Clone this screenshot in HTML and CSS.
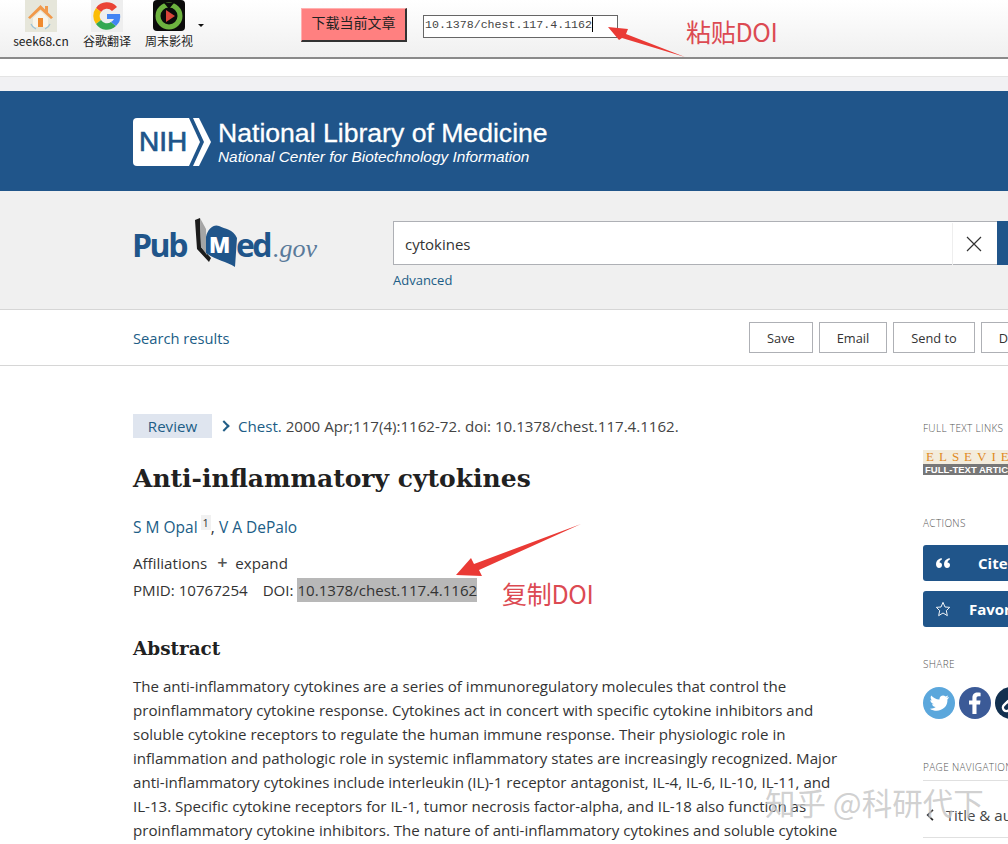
FILE: index.html
```html
<!DOCTYPE html>
<html lang="en">
<head>
    <meta charset="UTF-8">
    <title>Anti-inflammatory cytokines - PubMed</title>
    <link rel="stylesheet" href="styles.css">
</head>
<body>
<div class="page">
    <div class="browser-bar">
        <div class="fav">
            <svg class="fav-icon" viewBox="0 0 32 32">
                <rect width="32" height="32" fill="#e6e6da"/>
                <path d="M8 18 L15.500 11 L23 18 V27 H8 Z" fill="#f8f4ea"/>
                <path d="M15.500 5 L20 9.500 V6 H23 V12.500 L28 17.500 L26 19 L15.500 9.500 L5 19 L3 17.500 Z" fill="#f1994a"/>
                <rect x="13" y="18" width="5" height="9" fill="#ef8a2e"/>
                <path d="M6 24 C7 27 9 28 11 29 M25 24 C24 27 22 28 20 29" fill="none" stroke="#9cc3d8" stroke-width="1.200"/>
            </svg>
            <span>seek68.cn</span>
        </div>
        <div class="fav fav-wide">
            <svg class="fav-icon" viewBox="0 0 32 32">
                <rect width="32" height="32" fill="#eeeeee"/>
                <path d="M26 7 A13 13 0 0 0 5 8 L10 12 A7 7 0 0 1 21 11 Z" fill="#ea4335"/>
                <path d="M5 8 A13 13 0 0 0 5 24 L10 20 A7 7 0 0 1 10 12 Z" fill="#fbbc05"/>
                <path d="M5 24 A13 13 0 0 0 25 26 L20 22 A7 7 0 0 1 10 20 Z" fill="#34a853"/>
                <path d="M25 26 A13 13 0 0 0 29 14 H16 V19 H23 A7 7 0 0 1 20 22 Z" fill="#4285f4"/>
            </svg>
            <span>谷歌翻译</span>
        </div>
        <div class="fav fav-last">
            <svg class="fav-icon" viewBox="0 0 32 32">
                <rect width="32" height="31" rx="4" fill="#0b0b0b"/>
                <circle cx="16" cy="16" r="11" fill="none" stroke="#6db33f" stroke-width="5"/>
                <path d="M11 3 L21 3 L16 9 Z" fill="#0b0b0b"/>
                <path d="M13 10 L22 16 L13 22 Z" fill="#d9453a"/>
            </svg>
            <span>周末影视</span>
        </div>
        <span class="fav-more"></span>
        <button class="download-btn">下载当前文章</button>
        <div class="doi-input">10.1378/chest.117.4.1162<i class="caret"></i></div>
    </div>
    <div class="tab-gap"></div>

    <div class="nih-banner">
        <svg class="nih-logo" viewBox="0 0 78 48">
            <path d="M4 0 H56 L67 24 L56 48 H4 A4 4 0 0 1 0 44 V4 A4 4 0 0 1 4 0 Z" fill="#fff"/>
            <path d="M60 0 H66 L78 24 L66 48 H60 L71 24 Z" fill="#fff"/>
            <text x="6" y="33" class="nih-mark">NIH</text>
        </svg>
        <div class="nih-text">
            <div class="nih-title">National Library of Medicine</div>
            <div class="nih-sub">National Center for Biotechnology Information</div>
        </div>
    </div>

    <div class="search-band">
        <div class="pubmed-logo">
            <span class="pm-word">Pub</span>
            <svg class="pm-book" viewBox="0 0 54 54">
                <path d="M9 5 L14 3 L15 32 L25 43 L23 47 L11 34 Z" fill="#1c1c1c"/>
                <path d="M14 3 L20 14 L21 40 L15 32 Z" fill="#a5a5a5"/>
                <path d="M20 22 C22 13 28 9 33 11 C39 14 47 14 51 23 L49 52 C40 46 29 45 20 38 Z" fill="#20558a"/>
                <text x="23" y="38" class="pm-m">M</text>
            </svg>
            <span class="pm-word">ed</span>
            <span class="pm-gov">.gov</span>
        </div>
        <div class="search-col">
            <div class="search-row">
                <div class="search-box">
                    <span>cytokines</span>
                    <div class="search-clear">
                        <svg width="16" height="16" viewBox="0 0 16 16"><path d="M1 1 L15 15 M15 1 L1 15" stroke="#333" stroke-width="1.200"/></svg>
                    </div>
                </div>
                <div class="search-go"></div>
            </div>
            <a class="advanced">Advanced</a>
        </div>
    </div>

    <div class="results-bar">
        <a class="results-link">Search results</a>
        <div class="results-actions">
            <span class="action-btn">Save</span>
            <span class="action-btn">Email</span>
            <span class="action-btn">Send to</span>
            <span class="action-btn">Display options</span>
        </div>
    </div>

    <div class="content">
        <div class="article">
            <div class="cit-row">
                <span class="chip">Review</span>
                <span class="cit-chevron"></span>
                <span class="cit"><a>Chest.</a> 2000 Apr;117(4):1162-72. doi: 10.1378/chest.117.4.1162.</span>
            </div>
            <h1>Anti-inflammatory cytokines</h1>
            <div class="authors"><a>S M Opal</a><sup class="aff-num">1</sup>, <a>V A DePalo</a></div>
            <div class="affil">Affiliations <span class="plus">+</span> expand</div>
            <div class="ids">PMID: 10767254 <span class="doi-label">DOI:</span> <span class="selected">10.1378/chest.117.4.1162</span></div>
            <h2>Abstract</h2>
            <p class="abstract">The anti-inflammatory cytokines are a series of immunoregulatory molecules that control the proinflammatory cytokine response. Cytokines act in concert with specific cytokine inhibitors and soluble cytokine receptors to regulate the human immune response. Their physiologic role in inflammation and pathologic role in systemic inflammatory states are increasingly recognized. Major anti-inflammatory cytokines include interleukin (IL)-1 receptor antagonist, IL-4, IL-6, IL-10, IL-11, and IL-13. Specific cytokine receptors for IL-1, tumor necrosis factor-alpha, and IL-18 also function as proinflammatory cytokine inhibitors. The nature of anti-inflammatory cytokines and soluble cytokine</p>
        </div>
        <div class="sidebar">
            <div class="side-label">Full text links</div>
            <div class="elsevier">
                <div class="els-top">ELSEVIER</div>
                <div class="els-bottom">FULL-TEXT ARTICLE</div>
            </div>
            <div class="side-label side-actions">Actions</div>
            <div class="side-btn">
                <svg class="side-ico" width="16" height="12" viewBox="0 0 16 12">
                    <path id="qt" d="M6.500 1 C3 2 1 4 1 7 C1 9.500 2.500 11 4 11 C5.700 11 7 9.800 7 8 C7 6.500 6 5.500 4.500 5.500 C4.700 4 5.500 3 7 2.500 Z" fill="#fff"/>
                    <use href="#qt" x="8"/>
                </svg>
                <span class="side-btn-text cite-text">Cite</span>
            </div>
            <div class="side-btn">
                <svg class="side-ico" width="16" height="16" viewBox="0 0 24 24"><path d="M12 2 L15 9 L22 9.500 L17 14.500 L18.500 22 L12 18 L5.500 22 L7 14.500 L2 9.500 L9 9 Z" fill="none" stroke="#fff" stroke-width="1.400"/></svg>
                <span class="side-btn-text">Favorites</span>
            </div>
            <div class="side-label side-share">Share</div>
            <div class="share-row">
                <svg class="share" viewBox="0 0 32 32"><circle cx="16" cy="16" r="16" fill="#5ba7dc"/><path d="M26 10 C25 10.500 24.200 10.700 23.400 10.800 C24.300 10.300 24.900 9.500 25.200 8.600 C24.400 9.100 23.500 9.400 22.500 9.600 C20.500 7.500 16.400 8.700 16.400 12.500 C13 12.300 10.200 10.800 8.200 8.400 C7.100 10.200 7.700 12.500 9.300 13.600 C8.600 13.600 8 13.400 7.400 13.100 C7.400 15.100 8.800 16.700 10.700 17.100 C10.100 17.300 9.500 17.300 8.900 17.200 C9.400 18.800 11 20 12.700 20 C11 21.300 9 21.900 6.800 21.700 C15 27 25.200 21.500 24.400 12.600 C25 12.100 25.600 11.100 26 10 Z" fill="#fff"/></svg>
                <svg class="share" viewBox="0 0 32 32"><circle cx="16" cy="16" r="16" fill="#3b5a97"/><path d="M17.500 27 V17.500 H21 L21.500 13.500 H17.500 V11.200 C17.500 10 18 9.200 19.500 9.200 H21.600 V5.700 C21 5.600 19.800 5.500 18.600 5.500 C15.500 5.500 13.400 7.300 13.400 10.800 V13.500 H10 V17.500 H13.400 V27 Z" fill="#fff"/></svg>
                <svg class="share" viewBox="0 0 32 32"><circle cx="16" cy="16" r="16" fill="#12304f"/><g fill="none" stroke="#fff" stroke-width="2.400" transform="rotate(-45 16 16)"><rect x="6" y="12.500" width="12" height="7" rx="3.500"/><rect x="14" y="12.500" width="12" height="7" rx="3.500"/></g></svg>
            </div>
            <div class="side-label side-nav">Page navigation</div>
            <div class="page-nav">
                <svg width="10" height="14" viewBox="0 0 10 14"><path d="M8 1 L2 7 L8 13" fill="none" stroke="#222" stroke-width="2"/></svg>
                <span>Title &amp; authors</span>
            </div>
        </div>
    </div>

    <!-- screenshot annotations on top of the page -->
    <svg class="marks" width="1008" height="844" viewBox="0 0 1008 844">
        <polygon points="608,27 628,29 626,34 685,57 622,38 619,40" fill="#ea3a35"/>
        <polygon points="456,575 471,558 474,564 581,524 479,570 482,576" fill="#ea3a35"/>
    </svg>
    <div class="note note-paste">粘贴DOI</div>
    <div class="note note-copy">复制DOI</div>
    <div class="watermark">知乎 @科研代下</div>
</div>
</body>
</html>
```

FILE: styles.css
```css
* {
    box-sizing: border-box;
}

body {
    margin: 0;
    font-family: "Open Sans", "Noto Sans CJK SC", sans-serif;
    color: #333;
    background: #fff;
}

a {
    color: #205d86;
}

.page {
    position: relative;
    width: 1008px;
    height: 844px;
    overflow: hidden;
}

/* browser favourites bar */
.browser-bar {
    display: flex;
    align-items: flex-start;
    height: 59px;
    padding-left: 10px;
    background: linear-gradient(#ffffff, #f0f0f0);
    border-bottom: 2px solid #8a8a8a;
}

.fav {
    display: flex;
    flex-direction: column;
    align-items: center;
    width: 62px;
    font-family: "Noto Sans CJK SC", sans-serif;
    font-size: 12px;
    line-height: 17px;
    color: #222;
}

.fav-wide {
    margin-left: 4px;
}

.fav-last {
    margin-left: 0;
}

.fav-icon {
    display: block;
    width: 32px;
    height: 32px;
}

.fav-more {
    width: 0;
    height: 0;
    margin: 24px 0 0 -2px;
    border: 3px solid transparent;
    border-top: 3px solid #111;
}

.download-btn {
    width: 106px;
    height: 34px;
    margin: 8px 0 0 97px;
    padding: 0 0 6px;
    font-family: "Noto Sans CJK SC", sans-serif;
    font-size: 14px;
    color: #222;
    background: #ff8080;
    border: 1px solid #ffb0b0;
    border-right: 2px solid #333;
    border-bottom: 2px solid #333;
}

.doi-input {
    display: flex;
    align-items: center;
    width: 195px;
    height: 23px;
    margin: 15px 0 0 16px;
    padding: 0 0 4px 1px;
    font-family: "Liberation Mono", monospace;
    font-size: 11.600px;
    color: #444;
    background: #fff;
    border: 1px solid #666;
}

.caret {
    width: 1px;
    height: 15px;
    background: #000;
}

.tab-gap {
    height: 32px;
    background: linear-gradient(#fff 0, #fff 17px, #e4e4e4 17px, #e4e4e4 18px, #f1f1f3 18px);
}

/* NIH banner */
.nih-banner {
    display: flex;
    align-items: flex-start;
    height: 100px;
    padding: 27px 0 0 133px;
    background: #20558a;
    color: #fff;
}

.nih-logo {
    width: 78px;
    height: 48px;
    margin-right: 7px;
}

.nih-mark {
    font-family: "Liberation Sans", sans-serif;
    font-size: 28px;
    stroke: #20558a;
    stroke-width: 0.700px;
    fill: #20558a;
}

.nih-text {
    font-family: "Liberation Sans", sans-serif;
}

.nih-title {
    font-size: 26.600px;
    line-height: 30px;
    -webkit-text-stroke: 0.300px #fff;
}

.nih-sub {
    font-size: 15.400px;
    font-style: italic;
    line-height: 18px;
}

/* search */
.search-band {
    display: flex;
    height: 119px;
    padding: 30px 0 0 133px;
    background: #f0f0f0;
    border-bottom: 1px solid #d6d6d6;
}

.pubmed-logo {
    display: flex;
    flex: none;
    align-items: flex-start;
    width: 260px;
}

.pm-word {
    margin: 2px 0 0 -1px;
    font-size: 32px;
    font-weight: 700;
    line-height: 44px;
    letter-spacing: -2.500px;
    color: #20558a;
}

.pm-book {
    flex: none;
    width: 54px;
    height: 54px;
    margin: -6px -3px 0 0;
}

.pm-m {
    font-size: 22px;
    font-weight: 800;
    fill: #fff;
}

.pm-gov {
    margin: 10px 0 0 3px;
    font-family: "Liberation Serif", serif;
    font-size: 26px;
    font-style: italic;
    line-height: 36px;
    color: #5a7a9a;
}

.search-col {
    flex: none;
}

.search-row {
    display: flex;
}

.search-box {
    display: flex;
    align-items: center;
    justify-content: space-between;
    width: 604px;
    height: 44px;
    padding: 1px 0 0 11px;
    font-size: 15px;
    background: #fff;
    border: 1px solid #aeb0b5;
    border-right: none;
}

.search-clear {
    display: flex;
    align-items: center;
    justify-content: center;
    width: 45px;
    height: 42px;
    padding-right: 2px;
    border-left: 1px solid #eee;
}

.search-go {
    width: 60px;
    height: 44px;
    background: #20558a;
}

.advanced {
    display: block;
    margin-top: 6px;
    font-size: 13px;
    line-height: 18px;
}

/* results bar */
.results-bar {
    display: flex;
    align-items: center;
    justify-content: space-between;
    width: 1200px;
    height: 56px;
    padding: 0 0 0 133px;
    border-bottom: 1px solid #d6d6d6;
}

.results-link {
    font-size: 14.700px;
}

.results-actions {
    display: flex;
    gap: 6px;
    width: 451px;
}

.action-btn {
    padding: 0 17px;
    height: 31px;
    font-size: 12.800px;
    line-height: 30px;
    white-space: nowrap;
    color: #333;
    border: 1px solid #aeb0b5;
}

/* article and sidebar */
.content {
    display: flex;
    padding: 48px 0 0 133px;
}

.article {
    flex: none;
    width: 708px;
    margin-right: 82px;
}

.cit-row {
    display: flex;
    align-items: center;
    height: 24px;
    font-size: 15.100px;
}

.chip {
    width: 79px;
    height: 24px;
    line-height: 24px;
    text-align: center;
    color: #205d86;
    background: #dfe5ef;
}

.cit-chevron {
    width: 8px;
    height: 8px;
    margin: 0 10px 0 8px;
    border-top: 2px solid #205d86;
    border-right: 2px solid #205d86;
    transform: rotate(45deg);
}

.cit {
    color: #444;
}

h1 {
    margin: 23px 0 0;
    font-family: "DejaVu Serif", serif;
    font-size: 25px;
    font-weight: 700;
    line-height: 36px;
    color: #212121;
}

.authors {
    margin-top: 18px;
    height: 24px;
    font-size: 15.500px;
    line-height: 24px;
}

.aff-num {
    margin-left: 3px;
    padding: 0 2px;
    font-size: 11px;
    line-height: 0;
    background: #f1f1f1;
}

.affil {
    margin-top: 12px;
    font-size: 15.100px;
    line-height: 24px;
}

.plus {
    margin: 0 4px 0 6px;
    font-weight: 600;
    font-size: 18px;
    line-height: 1;
    color: #555;
}

.ids {
    margin-top: 3px;
    font-size: 15.100px;
    line-height: 24px;
}

.doi-label {
    margin-left: 11px;
}

.selected {
    display: inline-block;
    background: #b8b8b8;
}

h2 {
    margin: 31px 0 0;
    font-family: "DejaVu Serif", serif;
    font-size: 18.400px;
    font-weight: 700;
    line-height: 32px;
    color: #212121;
}

.abstract {
    margin: 9px 0 0;
    font-size: 15.100px;
    line-height: 24px;
}

.sidebar {
    flex: none;
    width: 126px;
}

.side-label {
    padding-top: 7px;
    font-size: 10px;
    font-weight: 300;
    line-height: 14px;
    letter-spacing: 0.350px;
    white-space: nowrap;
    text-transform: uppercase;
    color: #555;
}

.elsevier {
    width: 105px;
    height: 25px;
    margin-top: 15px;
    background: #f3ecdc;
}

.els-top {
    height: 14px;
    font-family: "Liberation Serif", serif;
    font-size: 13px;
    line-height: 14px;
    letter-spacing: 5px;
    color: #e08a1e;
    padding-left: 3px;
}

.els-bottom {
    height: 11px;
    font-family: "Liberation Sans", sans-serif;
    font-size: 9.500px;
    font-weight: 700;
    line-height: 11px;
    color: #fff;
    background: #777;
    padding-left: 2px;
    white-space: nowrap;
    overflow: hidden;
}

.side-actions {
    margin-top: 34px;
}

.side-btn {
    display: flex;
    align-items: center;
    height: 36px;
    margin-top: 10px;
    padding-left: 12px;
    font-size: 15px;
    font-weight: 700;
    color: #fff;
    background: #20558a;
    border-radius: 3px;
}

.side-actions + .side-btn {
    margin-top: 15px;
}

.side-ico {
    flex: none;
}

.side-btn-text {
    margin-left: 18px;
}

.cite-text {
    margin-left: 27px;
}

.side-share {
    margin-top: 23px;
}

.share-row {
    display: flex;
    gap: 4px;
    margin-top: 16px;
}

.share {
    width: 32px;
    height: 32px;
    flex: none;
}

.side-nav {
    margin-top: 34px;
}

.page-nav {
    display: flex;
    align-items: center;
    gap: 11px;
    height: 58px;
    margin-top: 6px;
    padding: 11px 0 0 3px;
    font-size: 15.100px;
    white-space: nowrap;
    color: #444;
    border-top: 1px solid #e0e0e0;
    border-bottom: 1px solid #e0e0e0;
}

/* annotations */
.marks {
    position: absolute;
    top: 0;
    left: 0;
}

.note {
    position: absolute;
    font-family: "Noto Sans CJK SC", sans-serif;
    font-size: 25px;
    line-height: 32px;
    letter-spacing: -0.300px;
    color: #dc4a52;
}

.note-paste {
    top: 15px;
    left: 686px;
}

.note-copy {
    top: 577px;
    left: 502px;
}

.watermark {
    position: absolute;
    top: 781px;
    left: 765px;
    font-family: "Noto Sans CJK SC", sans-serif;
    font-size: 30.500px;
    line-height: 42px;
    white-space: nowrap;
    color: rgba(170, 170, 170, 0.55);
    text-shadow: 0 0 2px rgba(255, 255, 255, 0.8);
}
```
